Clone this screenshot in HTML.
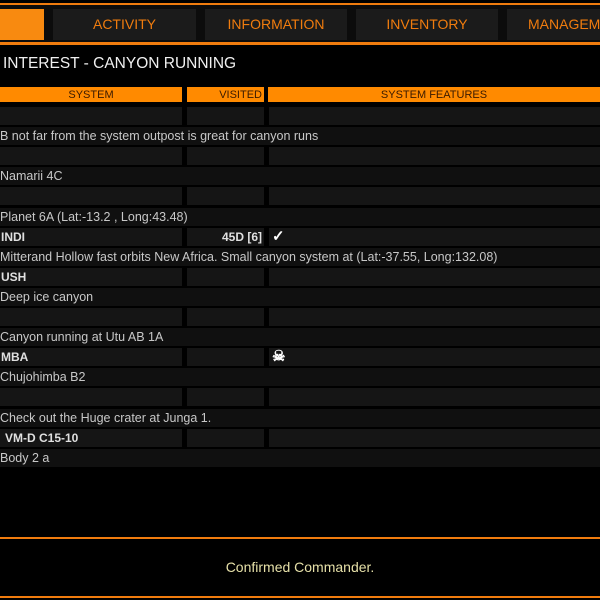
<!DOCTYPE html><html><head><style>
body{margin:0;width:600px;height:600px;background:#000;overflow:hidden;position:relative;font-family:"Liberation Sans",sans-serif}
.a{position:absolute}
.tab{position:absolute;top:9px;height:31px;background:#1b1b1b;color:#f07c0e;font-size:14px;line-height:31px;text-align:center;white-space:nowrap;overflow:hidden}
.h{position:absolute;top:87px;height:15px;background:#ff8a00;color:#3a1a00;font-size:11px;line-height:16px}
.c{position:absolute;height:18px;background:#151515}
.n{position:absolute;left:0;width:600px;height:18px;background:#101010;color:#c8c8c8;font-size:12.5px;line-height:18px;white-space:nowrap}
.t{position:absolute;color:#e0e0e0;font-size:12px;line-height:18px;font-weight:bold}
</style></head><body>
<div class="a" style="left:0;top:4px;width:600px;height:40px;background:#0c0c0c"></div>
<div class="a" style="left:0;top:3px;width:600px;height:2px;background:#f07c0e"></div>
<div class="a" style="left:0;top:42px;width:600px;height:3px;background:#f07c0e"></div>
<div class="a" style="left:0;top:9px;width:44px;height:31px;background:#f88a10"></div>
<div class="tab" style="left:53px;width:143px">ACTIVITY</div>
<div class="tab" style="left:205px;width:142px">INFORMATION</div>
<div class="tab" style="left:356px;width:142px">INVENTORY</div>
<div class="tab" style="left:507px;width:120px;text-align:left;padding-left:21px">MANAGEMENT</div>
<div class="a" style="left:3px;top:55px;color:#f0f0f0;font-size:15.5px">INTEREST - CANYON RUNNING</div>
<div class="h" style="left:0;width:182px;text-align:center">SYSTEM</div>
<div class="h" style="left:187px;width:75px;text-align:right;padding-right:2px">VISITED</div>
<div class="h" style="left:268px;width:332px;text-align:center">SYSTEM FEATURES</div>
<div id="rows"></div>
<script>
var r=[["",""],["","B not far from the system outpost is great for canyon runs"],["",""],["","Namarii 4C"],["",""],["","Planet 6A (Lat:-13.2 , Long:43.48)"],["INDI","45D [6]","✓"],["","Mitterand Hollow fast orbits New Africa. Small canyon system at (Lat:-37.55, Long:132.08)"],["USH",""],["","Deep ice canyon"],["",""],["","Canyon running at Utu AB 1A"],["MBA","","☠"],["","Chujohimba B2"],["",""],["","Check out the Huge crater at Junga 1."],["VM-D C15-10",""],["","Body 2 a"]];
var h="";
for(var i=0;i<r.length;i++){var y=107+Math.round(i*20.1);
if(i%2==0){h+='<div class="c" style="left:0;top:'+y+'px;width:182px"></div><div class="c" style="left:187px;top:'+y+'px;width:77px"></div><div class="c" style="left:269px;top:'+y+'px;width:331px"></div>';
h+='<div class="t" style="left:'+(r[i][0][0]=="V"?5:1)+'px;top:'+y+'px">'+r[i][0]+'</div>';
if(r[i][1])h+='<div class="t" style="left:187px;width:75px;text-align:right;top:'+y+'px">'+r[i][1]+'</div>';
if(r[i][2])h+='<div class="t" style="left:272px;top:'+y+'px;font-size:15px;color:#fff">'+r[i][2]+'</div>';}
else h+='<div class="n" style="top:'+y+'px">'+r[i][1]+'</div>';}
document.getElementById("rows").innerHTML=h;
</script>
<div class="a" style="left:0;top:537px;width:600px;height:2px;background:#f07c0e"></div>
<div class="a" style="left:0;top:596px;width:600px;height:2px;background:#f07c0e"></div>
<div class="a" style="left:0;top:559px;width:600px;text-align:center;color:#e6e0a8;font-size:14px">Confirmed Commander.</div>
</body></html>
